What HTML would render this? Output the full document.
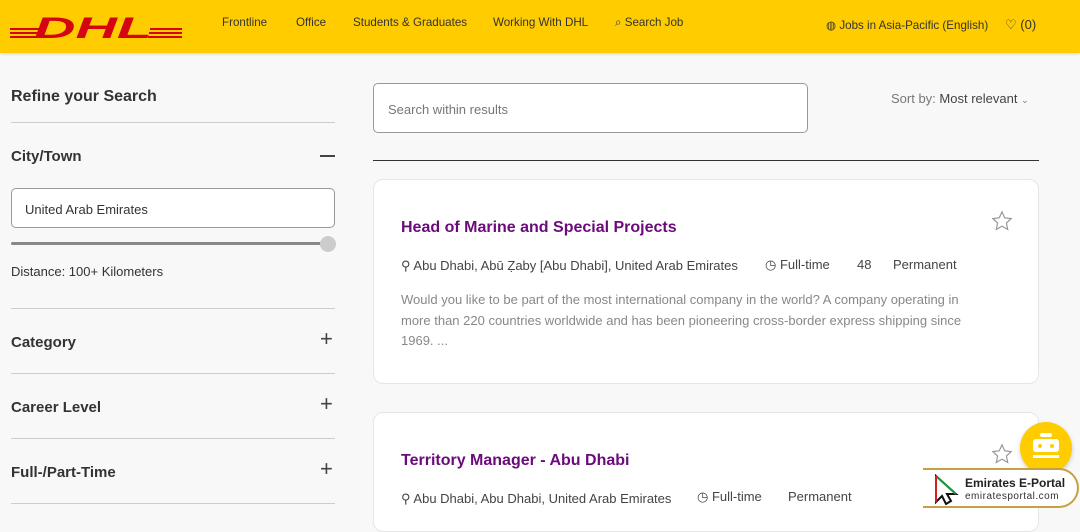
<!DOCTYPE html>
<html><head><meta charset="utf-8"><style>
*{box-sizing:border-box;margin:0;padding:0}
body{width:1080px;height:510px;overflow:hidden;background:#f8f8f8;font-family:"Liberation Sans",sans-serif;color:#333;position:relative}
.hdr{position:absolute;left:0;top:0;width:1080px;height:53px;background:#fc0;box-shadow:0 1px 3px rgba(0,0,0,.15)}
.hdr .nav{position:absolute;top:16px;font-size:11.6px;color:#333}
.logo{position:absolute;left:10px;top:11px;width:172px;height:28px}
.side h2{position:absolute;left:11px;font-size:16px;font-weight:bold;color:#333}
.hr{position:absolute;left:11px;width:324px;height:1px;background:#ccc}
.plus{position:absolute;left:320px;font-size:22px;color:#444;font-weight:300}
.card{position:absolute;left:373px;width:666px;background:#fff;border:1px solid #e6e6e6;border-radius:10px}
.title{position:absolute;left:27px;font-size:16px;font-weight:bold;color:#6b0a7b}
.meta{position:absolute;left:27px;font-size:13px;color:#444;white-space:nowrap}
.desc{position:absolute;left:27px;top:110px;width:578px;font-size:13px;line-height:20.5px;color:#888}
.star{position:absolute;left:617px;top:30px}
</style></head><body>
<div class="hdr">
 <svg class="logo" viewBox="0 0 172 28">
  <g fill="#d40511">
   <rect x="0" y="17" width="30" height="2"/><rect x="0" y="21" width="29" height="2"/><rect x="0" y="25" width="28" height="2"/>
   <rect x="140" y="17" width="32" height="2"/><rect x="139" y="21" width="33" height="2"/><rect x="138" y="25" width="34" height="2"/>
  </g>
  <text x="24" y="27" font-family="Liberation Sans" font-weight="bold" font-style="italic" font-size="30" fill="#d40511" textLength="118" lengthAdjust="spacingAndGlyphs">DHL</text>
 </svg>
 <span class="nav" style="left:222px">Frontline</span>
 <span class="nav" style="left:296px">Office</span>
 <span class="nav" style="left:353px">Students &amp; Graduates</span>
 <span class="nav" style="left:493px">Working With DHL</span>
 <span class="nav" style="left:615px">⌕ Search Job</span>
 <span class="nav" style="left:826px;top:18px">◍ Jobs in Asia-Pacific (English)</span>
 <span class="nav" style="left:1005px;top:17px;font-size:13px">♡ (0)</span>
</div>
<div class="side">
 <h2 style="top:88px">Refine your Search</h2>
 <div class="hr" style="top:122px"></div>
 <h2 style="top:148px;font-size:15px">City/Town</h2>
 <div style="position:absolute;left:320px;top:155px;width:15px;height:1.5px;background:#444"></div>
 <div style="position:absolute;left:11px;top:188px;width:324px;height:40px;border:1px solid #999;border-radius:5px;background:#fff;font-size:13px;padding:13px 13px">United Arab Emirates</div>
 <div style="position:absolute;left:11px;top:242px;width:316px;height:3px;background:#888;border-radius:2px"></div>
 <div style="position:absolute;left:320px;top:236px;width:16px;height:16px;background:#ccc;border-radius:50%"></div>
 <div style="position:absolute;left:11px;top:264px;font-size:13px">Distance: 100+ Kilometers</div>
 <div class="hr" style="top:308px"></div>
 <h2 style="top:334px;font-size:15px">Category</h2><span class="plus" style="top:326px">+</span>
 <div class="hr" style="top:373px"></div>
 <h2 style="top:399px;font-size:15px">Career Level</h2><span class="plus" style="top:391px">+</span>
 <div class="hr" style="top:438px"></div>
 <h2 style="top:464px;font-size:15px">Full-/Part-Time</h2><span class="plus" style="top:456px">+</span>
 <div class="hr" style="top:503px"></div>
</div>
<div style="position:absolute;left:373px;top:83px;width:435px;height:50px;border:1px solid #999;border-radius:5px;background:#fff;font-size:13px;color:#777;padding:18px 14px">Search within results</div>
<div style="position:absolute;left:891px;top:91px;font-size:13px;color:#777">Sort by: <span style="color:#444">Most relevant</span> <span style="font-size:9px">⌄</span></div>
<div style="position:absolute;left:373px;top:160px;width:666px;height:1px;background:#333"></div>
<div class="card" style="top:179px;height:205px">
 <div class="title" style="top:39px">Head of Marine and Special Projects</div>
 <svg class="star" width="22" height="22" viewBox="0 0 24 24"><path d="M12 2l3 6.6 7 .8-5.2 4.8 1.4 7L12 17.6 5.8 21.2l1.4-7L2 9.4l7-.8z" fill="none" stroke="#999" stroke-width="1.3"/></svg>
 <div class="meta" style="top:78px">⚲ Abu Dhabi, Abū Ẓaby [Abu Dhabi], United Arab Emirates</div>
 <div class="meta" style="top:77px;left:391px">◷ Full-time</div>
 <div class="meta" style="top:77px;left:483px">48</div>
 <div class="meta" style="top:77px;left:519px">Permanent</div>
 <div class="desc">Would you like to be part of the most international company in the world? A company operating in more than 220 countries worldwide and has been pioneering cross-border express shipping since 1969. ...</div>
</div>
<div class="card" style="top:412px;height:120px">
 <div class="title" style="top:39px">Territory Manager - Abu Dhabi</div>
 <svg class="star" width="22" height="22" viewBox="0 0 24 24"><path d="M12 2l3 6.6 7 .8-5.2 4.8 1.4 7L12 17.6 5.8 21.2l1.4-7L2 9.4l7-.8z" fill="none" stroke="#999" stroke-width="1.3"/></svg>
 <div class="meta" style="top:78px">⚲ Abu Dhabi, Abu Dhabi, United Arab Emirates</div>
 <div class="meta" style="top:76px;left:323px">◷ Full-time</div>
 <div class="meta" style="top:76px;left:414px">Permanent</div>
</div>
<div style="position:absolute;left:1020px;top:422px;width:52px;height:52px;border-radius:50%;background:#fc0;box-shadow:0 2px 5px rgba(0,0,0,.2)">
 <div style="position:absolute;left:20px;top:11px;width:12px;height:4px;background:#fff;border-radius:2px"></div>
 <div style="position:absolute;left:13px;top:17px;width:26px;height:13px;background:#fff;border-radius:3px"></div>
 <div style="position:absolute;left:18px;top:22px;width:4px;height:4px;background:#fc0;border-radius:50%"></div>
 <div style="position:absolute;left:30px;top:22px;width:4px;height:4px;background:#fc0;border-radius:50%"></div>
 <div style="position:absolute;left:13px;top:33px;width:26px;height:3px;background:#fff"></div>
</div>
<div style="position:absolute;left:923px;top:468px;width:156px;height:40px;background:#fff;border:2px solid #c8a040;border-left:none;border-radius:0 20px 20px 0">
 <svg style="position:absolute;left:10px;top:4px" width="26" height="32" viewBox="0 0 26 32"><path d="M3 2L3 28 9 22 13 30 18 27 14 20 23 20Z" fill="#fff" stroke="#111" stroke-width="2"/><path d="M3 2L23 20" stroke="#1a9a3a" stroke-width="2"/><path d="M3 2L3 28" stroke="#d02020" stroke-width="2"/></svg>
 <div style="position:absolute;left:42px;top:6px;font-size:12px;font-weight:bold;color:#222">Emirates E-Portal</div>
 <div style="position:absolute;left:42px;top:21px;font-size:10px;color:#333;letter-spacing:.5px">emiratesportal.com</div>
</div>
</body></html>
